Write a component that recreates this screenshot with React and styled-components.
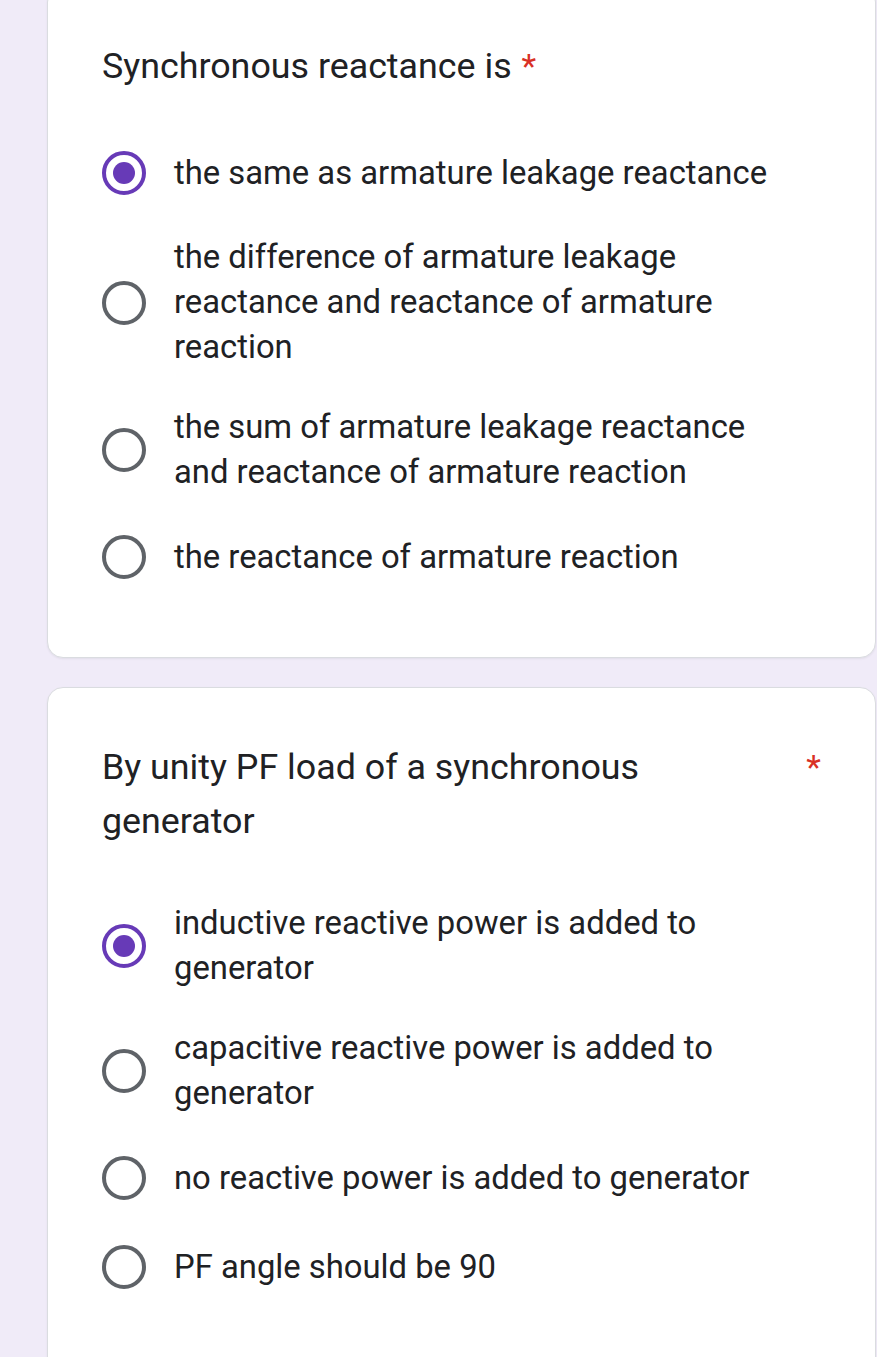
import React from 'react'
import styled, { createGlobalStyle } from 'styled-components'

const GlobalStyle = createGlobalStyle`
  html, body {
    margin: 0;
    padding: 0;
    background: #f0ebf8;
    font-family: Roboto, "Noto Sans", "Liberation Sans", sans-serif;
    color: #202124;
  }
`

const Page = styled.div`
  display: flex;
  flex-direction: column;
  gap: 29px;
  padding: 0 1px 0 47px;
  margin-top: -14px;
  overflow: hidden;
`

const Card = styled.div`
  background: #ffffff;
  border: 1px solid #dadce0;
  border-radius: 16px;
  padding: 52px 54px ${({ $bottom }) => $bottom}px 54px;
  box-shadow: 0 1px 2px rgba(60, 64, 67, 0.08);
`

const Header = styled.div`
  display: flex;
  align-items: flex-start;
  justify-content: space-between;
`

const Title = styled.div`
  font-size: 35.8px;
  line-height: 54px;
  max-width: ${({ $max }) => $max || 'none'};
`

const Star = styled.span`
  color: #d93025;
  font-size: 34px;
  line-height: ${({ $inline }) => ($inline ? '1' : '54px')};
  margin-left: ${({ $inline }) => ($inline ? '10px' : '0')};
`

const Options = styled.div`
  display: flex;
  flex-direction: column;
  gap: 35px;
  margin-top: 53px;
`

const Option = styled.label`
  display: flex;
  align-items: center;
  gap: 28px;
  min-height: 54px;
`

const Radio = styled.span`
  flex: none;
  box-sizing: border-box;
  width: 44px;
  height: 44px;
  border-radius: 50%;
  border: 4px solid ${({ $checked }) => ($checked ? '#673ab7' : '#5f6368')};
  display: flex;
  align-items: center;
  justify-content: center;
  &::after {
    content: '';
    width: 22px;
    height: 22px;
    border-radius: 50%;
    background: #673ab7;
    display: ${({ $checked }) => ($checked ? 'block' : 'none')};
  }
`

const Label = styled.span`
  font-size: 32.8px;
  line-height: 45px;
  max-width: 612px;
`

const questions = [
  {
    title: 'Synchronous reactance is',
    inlineStar: true,
    bottom: 73,
    options: [
      'the same as armature leakage reactance',
      'the difference of armature leakage reactance and reactance of armature reaction',
      'the sum of armature leakage reactance and reactance of armature reaction',
      'the reactance of armature reaction',
    ],
    selected: 0,
  },
  {
    title: 'By unity PF load of a synchronous generator',
    inlineStar: false,
    bottom: 120,
    options: [
      'inductive reactive power is added to generator',
      'capacitive reactive power is added to generator',
      'no reactive power is added to generator',
      'PF angle should be 90',
    ],
    selected: 0,
  },
]

function Question({ q }) {
  return (
    <Card $bottom={q.bottom}>
      {q.inlineStar ? (
        <Title>
          {q.title}
          <Star $inline>*</Star>
        </Title>
      ) : (
        <Header>
          <Title $max="600px">{q.title}</Title>
          <Star>*</Star>
        </Header>
      )}
      <Options>
        {q.options.map((opt, i) => (
          <Option key={i}>
            <Radio $checked={i === q.selected} />
            <Label>{opt}</Label>
          </Option>
        ))}
      </Options>
    </Card>
  )
}

export default function App() {
  return (
    <>
      <GlobalStyle />
      <Page>
        {questions.map((q, i) => (
          <Question key={i} q={q} />
        ))}
      </Page>
    </>
  )
}
